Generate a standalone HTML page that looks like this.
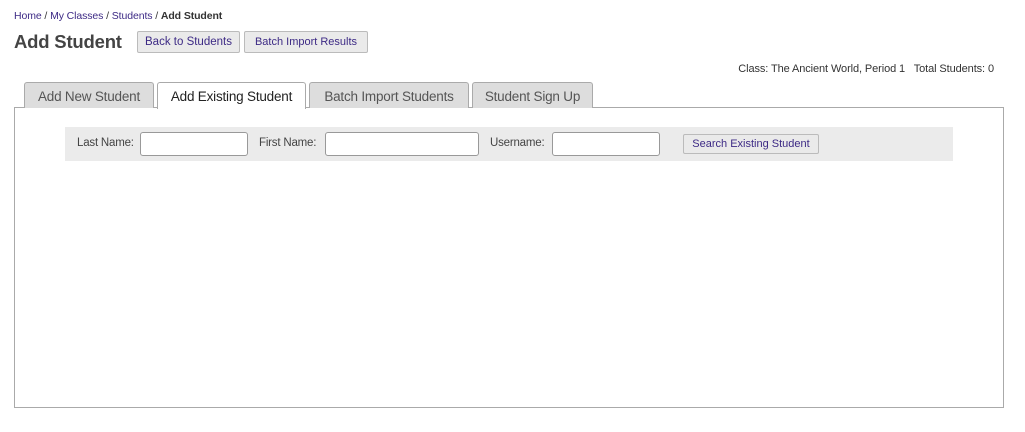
<!DOCTYPE html>
<html><head><style>
*{box-sizing:border-box;margin:0;padding:0}
body{width:1025px;height:432px;background:#fff;font-family:"Liberation Sans",sans-serif;color:#333;position:relative;overflow:hidden}
a{color:#3d2a85;text-decoration:none}
.abs{position:absolute;white-space:nowrap}
.btn{position:absolute;background:#eaeaea;border:1px solid #bbb;border-radius:2px;color:#3d2a85;font-size:11.5px;text-align:center;line-height:20px;white-space:nowrap;overflow:hidden}
.tab{position:absolute;top:82px;height:26px;background:#ddd;border:1px solid #aaa;border-bottom:none;border-radius:3px 3px 0 0;font-size:13.5px;color:#555;text-align:center;line-height:27px;white-space:nowrap;letter-spacing:-0.2px}
.inp{position:absolute;top:132px;height:24px;border:1px solid #999;border-radius:3px;background:#fff}
.lbl{position:absolute;top:137px;font-size:11.5px;color:#444;white-space:nowrap;letter-spacing:-0.2px}
</style></head><body>
<div class="abs" style="left:14px;top:10px;font-size:10.5px;letter-spacing:-0.1px"><a>Home</a> / <a>My Classes</a> / <a>Students</a> / <b style="color:#333">Add Student</b></div>
<div class="abs" style="left:14px;top:31px;font-size:18.5px;font-weight:bold;color:#444;letter-spacing:-0.2px">Add Student</div>
<div class="btn" style="left:137px;top:31px;width:103px;height:22px">Back to Students</div>
<div class="btn" style="left:244px;top:31px;width:124px;height:22px;font-size:11px">Batch Import Results</div>
<div class="abs" style="right:31px;top:63px;font-size:11px;color:#333;letter-spacing:-0.1px">Class: The Ancient World, Period 1&nbsp;&nbsp; Total Students: 0</div>
<div style="position:absolute;left:14px;top:107px;width:990px;height:301px;border:1px solid #aaa"></div>
<div class="tab" style="left:24px;width:130px">Add New Student</div>
<div class="tab" style="left:157px;width:149px;background:#fff;color:#222;height:27px">Add Existing Student</div>
<div class="tab" style="left:309px;width:160px">Batch Import Students</div>
<div class="tab" style="left:472px;width:121px">Student Sign Up</div>
<div style="position:absolute;left:65px;top:127px;width:888px;height:34px;background:#ebebeb"></div>
<div class="lbl" style="left:77px">Last Name:</div>
<div class="inp" style="left:140px;width:108px"></div>
<div class="lbl" style="left:259px">First Name:</div>
<div class="inp" style="left:325px;width:154px"></div>
<div class="lbl" style="left:490px">Username:</div>
<div class="inp" style="left:552px;width:108px"></div>
<div class="btn" style="left:683px;top:134px;width:136px;height:20px;line-height:18px;font-size:11px">Search Existing Student</div>
</body></html>
